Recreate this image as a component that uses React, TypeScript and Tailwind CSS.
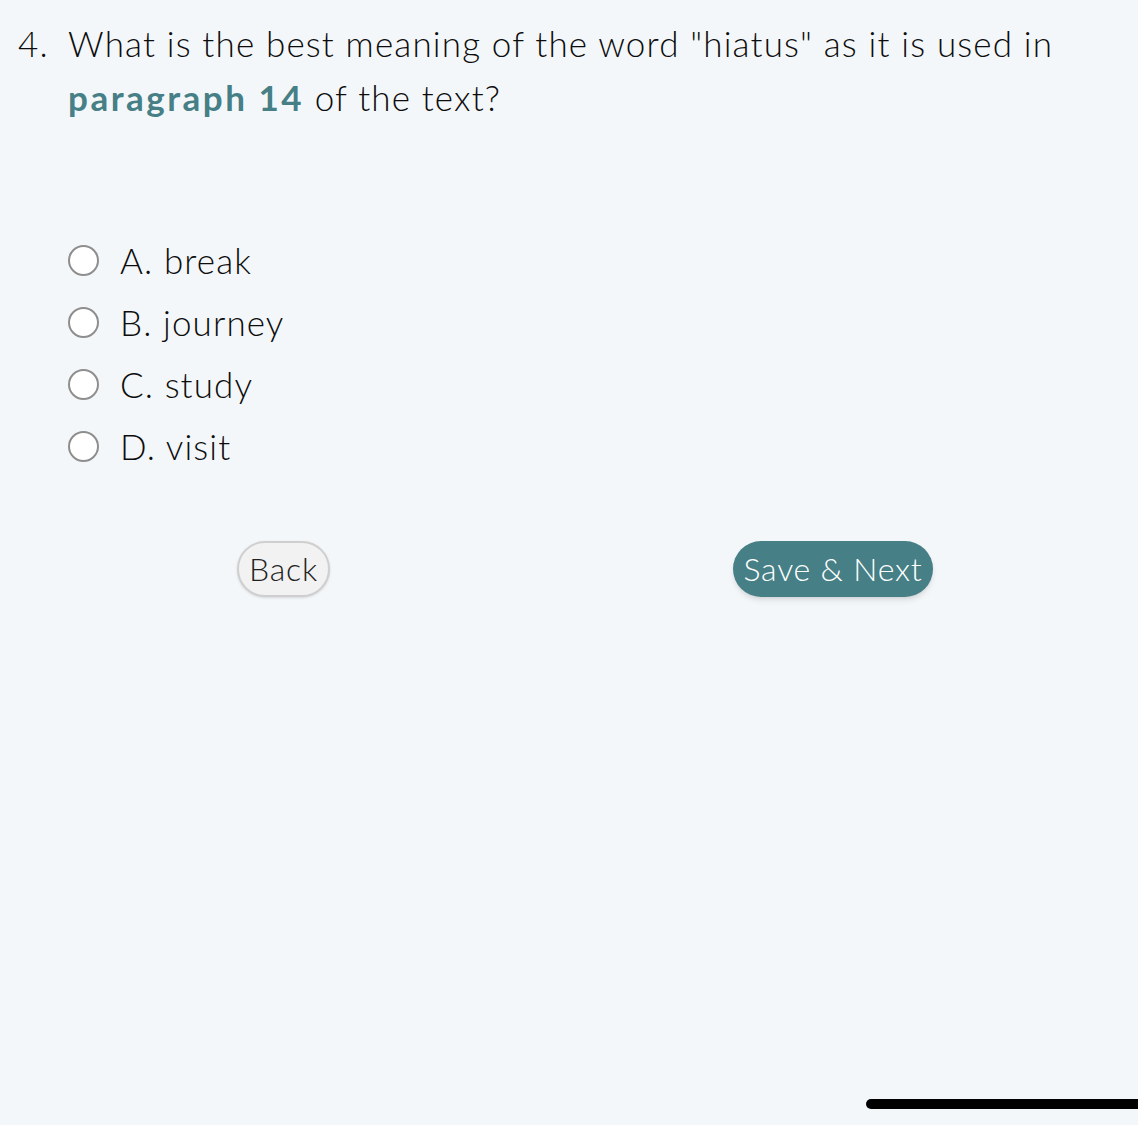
const options = ["A. break", "B. journey", "C. study", "D. visit"];

function Radio() {
  return (
    <span className="block h-[31px] w-[31px] shrink-0 rounded-full border-[2.5px] border-[#8e8e8e] bg-white" />
  );
}

export default function App() {
  return (
    <div
      className="relative h-[1125px] w-[1138px] overflow-hidden bg-[#f4f7fa] text-[#0d0d0d]"
      style={{ fontFamily: "Lato, 'Noto Sans', sans-serif" }}
    >
      <div className="flex pl-[18px] pt-[16px] text-[35px] font-light leading-[54px] tracking-[1.15px]">
        <span className="w-[50px] shrink-0">4.</span>
        <p>
          What is the best meaning of the word "hiatus" as it is used in
          <br />
          <span className="font-bold tracking-[2.5px] text-[#467f86]">paragraph 14</span> of the text?
        </p>
      </div>

      <ul className="mt-[114px] flex flex-col gap-[18px] pl-[68px]">
        {options.map((option) => (
          <li key={option} className="flex h-[44px] items-center gap-[21px] text-[35px] font-light tracking-[1.1px]">
            <Radio />
            <span>{option}</span>
          </li>
        ))}
      </ul>

      <div className="mt-[73px] flex items-center pl-[237px]">
        <button className="h-[56px] w-[93px] rounded-full border-2 border-[#cfcfcf] bg-[#f2f2f2] text-[32px] font-light tracking-[0.8px] text-[#222] shadow-sm">
          Back
        </button>
        <button className="ml-[403px] h-[56px] w-[200px] rounded-full bg-[#467f86] text-[32px] font-light tracking-[0.8px] text-white shadow-md">
          Save &amp; Next
        </button>
      </div>

      <div className="absolute left-[866px] top-[1099px] h-[10px] w-[320px] rounded-full bg-black" />
    </div>
  );
}
